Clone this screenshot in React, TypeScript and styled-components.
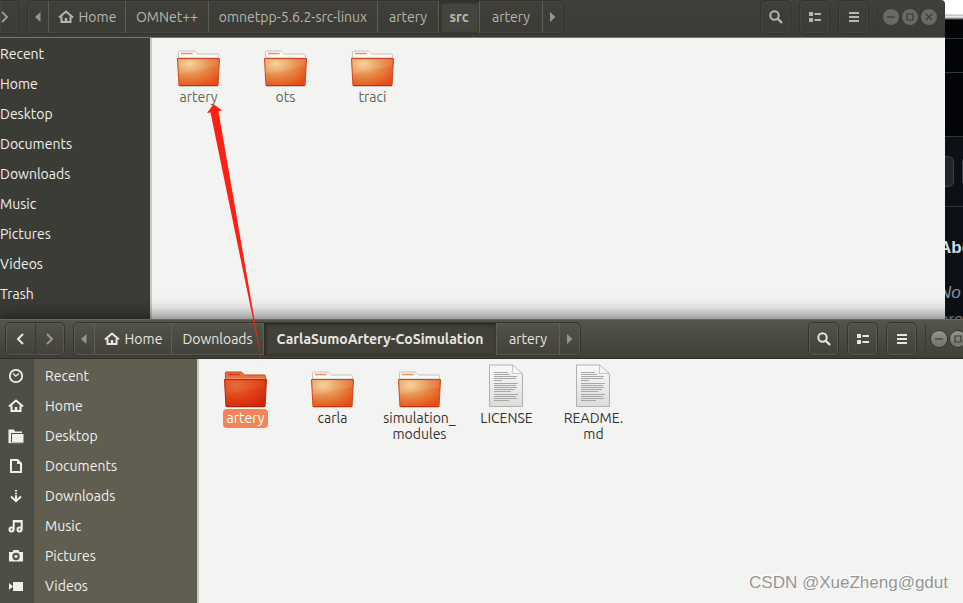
import React from "react";
import styled, { createGlobalStyle, css } from "styled-components";

const Global = createGlobalStyle`
  *, *::before, *::after { box-sizing: border-box; }
  body { margin: 0; background: #f3f3f2; font-family: Ubuntu, "Noto Sans", sans-serif; font-size: 14px; }
  button { font: inherit; color: inherit; padding: 0; margin: 0; border: 0; background: none; cursor: pointer; }
  ul { list-style: none; margin: 0; padding: 0; }
  a { color: inherit; text-decoration: none; }
  svg { display: block; flex: none; }
`;

const Desktop = styled.div`
  position: relative;
  display: flex;
  flex-direction: column;
  height: 100vh;
  overflow: hidden;
`;

const BackArea = styled.div`
  display: flex;
  flex: 0 0 319px;
  min-height: 0;
  overflow: hidden;
  background: linear-gradient(#fff 14px, #b9b9b9 15px, #f4f4f4 17px, #0b0e13 20px);
`;

const Win = styled.section<{ $front?: boolean }>`
  position: relative;
  display: flex;
  flex-direction: column;
  flex: 1;
  min-width: 0;
  min-height: 0;
  ${(p) => p.$front && css`box-shadow: 0 0 18px 2px rgba(0, 0, 0, 0.6);`}
`;

const Header = styled.header<{ $front?: boolean }>`
  display: flex;
  align-items: center;
  flex: none;
  height: ${(p) => (p.$front ? 40 : 38)}px;
  color: ${(p) => (p.$front ? "#e8e6e0" : "#b8b6ae")};
  ${(p) =>
    p.$front
      ? css`
          width: calc(100% + 26px);
          padding: 0 4px 0 5px;
          border-top: 1px solid #6a695d;
          border-bottom: 1px solid #2c2c28;
          background: linear-gradient(#56554a, #403f39);
        `
      : css`
          padding: 0 8px 3px 0;
          border-bottom: 1px solid #77766f;
          border-top-right-radius: 4px;
          background: linear-gradient(#403f3a, #3b3b36);
        `}
`;

const edge = css<{ $front?: boolean }>`
  border: 1px solid ${(p) => (p.$front ? "#35352f" : "#33332e")};
  box-shadow: inset 0 0 0 1px ${(p) => (p.$front ? "#5b5a50" : "#464640")};
  height: 34px;
`;

const NavGroup = styled.div<{ $front?: boolean }>`
  ${edge}
  display: flex;
  border-radius: 5px;
  width: ${(p) => (p.$front ? 60 : 19)}px;
  margin-right: 8px;
  ${(p) => !p.$front && css`border-left: 0; border-radius: 0 5px 5px 0;`}
`;

const NavButton = styled.button<{ $dim?: boolean; $start?: boolean }>`
  display: flex;
  flex: 1;
  align-items: center;
  justify-content: ${(p) => (p.$start ? "flex-start" : "center")};
  color: ${(p) => (p.$dim ? "#9a988f" : "inherit")};
  & + & { border-left: 1px solid #3a3a34; }
`;

const PathBar = styled.nav<{ $front?: boolean }>`
  ${edge}
  display: flex;
  overflow: hidden;
  border-radius: 5px;
`;

const Crumb = styled.button<{ $w: number; $active?: boolean; $front?: boolean }>`
  display: flex;
  align-items: center;
  justify-content: center;
  gap: 5px;
  width: ${(p) => p.$w}px;
  white-space: nowrap;
  & + & { border-left: 1px solid ${(p) => (p.$front ? "#5f5e54" : "#4f4f48")}; }
  ${(p) =>
    p.$active &&
    css`
      font-weight: 700;
      background: ${p.$front ? "#41413a" : "#45453f"};
      box-shadow: inset 1px 1px 3px 1px rgba(0, 0, 0, 0.35);
    `}
`;

const Tools = styled.div`
  display: flex;
  align-items: center;
  gap: 8px;
  margin-left: auto;
`;

const ToolButton = styled.button<{ $front?: boolean }>`
  ${edge}
  display: flex;
  align-items: center;
  justify-content: center;
  width: 31px;
  border-radius: 5px;
`;

const Controls = styled.div<{ $front?: boolean }>`
  display: flex;
  align-items: center;
  gap: 3px;
  height: 28px;
  padding-left: 5px;
  border-left: 1px solid ${(p) => (p.$front ? "#3a3933" : "#383833")};
`;

const Round = styled.button<{ $front?: boolean }>`
  display: flex;
  align-items: center;
  justify-content: center;
  width: 16px;
  height: 16px;
  border-radius: 50%;
  color: #3c3b36;
  background: ${(p) => (p.$front ? "linear-gradient(#94938c, #73726a)" : "#6a6963")};
  box-shadow: 0 0 0 1px ${(p) => (p.$front ? "#35352f" : "#3d3c37")};
`;

const Body = styled.div`
  display: flex;
  flex: 1;
  min-height: 0;
`;

const Side = styled.aside<{ $front?: boolean }>`
  flex: none;
  overflow: hidden;
  color: #f1f0ed;
  width: ${(p) => (p.$front ? 197 : 150)}px;
  background: ${(p) =>
    p.$front ? "linear-gradient(90deg, #4f4e44 32px, #47463d 33px, #605d51 34px)" : "#3c3c37"};
  padding-top: ${(p) => (p.$front ? 2 : 1)}px;
`;

const Place = styled.a`
  display: flex;
  align-items: center;
  height: 30px;
`;

const PlaceIcon = styled.span`
  display: flex;
  justify-content: center;
  width: 32px;
  margin-right: 13px;
`;

const Files = styled.main<{ $front?: boolean }>`
  display: grid;
  grid-template-columns: repeat(auto-fill, 87px);
  align-content: start;
  flex: 1;
  min-width: 0;
  padding: 5px 0 0 3px;
  border-left: 2px solid #cbc8c5;
  background: #f3f3f2;
  color: ${(p) => (p.$front ? "#33332f" : "#62625d")};
`;

const FileItem = styled.button`
  display: flex;
  flex-direction: column;
  align-items: center;
  justify-content: flex-start;
`;

const IconBox = styled.span`
  display: flex;
  align-items: flex-end;
  height: 44px;
  margin-bottom: 1px;
`;

const FileName = styled.span<{ $selected?: boolean }>`
  padding: 1px 3px 2px;
  border-radius: 4px;
  line-height: 16px;
  white-space: pre-line;
  ${(p) => p.$selected && css`background: #f0855a; color: #fff;`}
`;

const Sliver = styled.div`
  flex: 0 0 18px;
  overflow: hidden;
  margin-top: 20px;
  background: #0d1117;
  font-family: "Liberation Sans", Arial, sans-serif;
  white-space: nowrap;
`;

const DarkBand = styled.div<{ $h: number; $bg: string }>`
  height: ${(p) => p.$h}px;
  border-bottom: 1px solid #30353b;
  background: ${(p) => p.$bg};
`;

const ButtonBand = styled(DarkBand)`
  display: flex;
  align-items: center;
  gap: 8px;
`;

const Chip = styled.button<{ $end?: boolean }>`
  flex: none;
  width: 9px;
  height: 31px;
  border: 1px solid #3b4148;
  background: #21262d;
  ${(p) => (p.$end ? css`border-left: 0; border-radius: 0 6px 6px 0;` : css`border-radius: 6px 0 0 6px;`)}
`;

const About = styled.h2`
  margin: 29px 0 0 -6px;
  font-size: 17px;
  line-height: 24px;
  color: #d5dbe2;
`;

const Note = styled.p<{ $italic?: boolean }>`
  margin: ${(p) => (p.$italic ? "20px 0 0 -6px" : "1px 0 0 -6px")};
  font-size: 17px;
  line-height: 26px;
  font-style: ${(p) => (p.$italic ? "italic" : "normal")};
  color: #8b949e;
`;

const Arrow = styled.svg`
  position: absolute;
  left: 206px;
  top: 103px;
  pointer-events: none;
`;

const Watermark = styled.div`
  position: absolute;
  right: 15px;
  bottom: 8px;
  font-family: "Liberation Sans", Arial, sans-serif;
  font-size: 17px;
  line-height: 24px;
  color: #969694;
  text-shadow: -1px -1px 0 #fff;
`;

const Chevron = ({ left }: { left?: boolean }) => (
  <svg width="10" height="14" viewBox="0 0 10 14" fill="none" stroke="currentColor" strokeWidth="2">
    <path d={left ? "M8 2 3 7l5 5" : "M2 2l5 5-5 5"} />
  </svg>
);

const Triangle = ({ left }: { left?: boolean }) => (
  <svg width="6" height="10" viewBox="0 0 6 10" fill="#96958d">
    <path d={left ? "M5.500 0v10L0 5z" : "M0 0v10l5.500-5z"} />
  </svg>
);

const HomeIcon = () => (
  <svg width="16" height="14" viewBox="0 0 16 14" fill="none" stroke="currentColor" strokeWidth="2">
    <path d="M1 7.500 8 1.500l7 6" />
    <path d="M3.500 6.500V12h9V6.500" />
    <path d="M8 8v4" strokeWidth="2.400" />
  </svg>
);

const SearchIcon = () => (
  <svg width="16" height="16" viewBox="0 0 16 16" fill="none" stroke="currentColor" strokeWidth="2">
    <circle cx="6.500" cy="6.500" r="4.200" />
    <path d="m9.500 9.500 4.500 4.500" strokeWidth="2.400" />
  </svg>
);

const ListIcon = () => (
  <svg width="12" height="10" viewBox="0 0 12 10" fill="currentColor">
    <path d="M0 0h4v4H0zM0 6h4v4H0zM5.500 1h6.500v2H5.500zM5.500 7h6.500v2H5.500z" />
  </svg>
);

const MenuIcon = () => (
  <svg width="10" height="10" viewBox="0 0 10 10" fill="currentColor">
    <path d="M0 0h10v2H0zM0 4h10v2H0zM0 8h10v2H0z" />
  </svg>
);

const ControlGlyph = ({ d }: { d: string }) => (
  <svg width="16" height="16" viewBox="0 0 16 16" fill="none" stroke="currentColor" strokeWidth="1.200">
    <path d={d} />
  </svg>
);

const PlaceGlyph = ({ name }: { name: string }) => {
  if (name === "Home") return <HomeIcon />;
  return (
    <svg width="16" height="16" viewBox="0 0 16 16" fill="none" stroke="currentColor" strokeWidth="2">
      {name === "Recent" && (
        <>
          <circle cx="8" cy="8" r="6.200" strokeWidth="1.800" />
          <path d="M5 5.500 7.800 8.200 11 5.500" strokeWidth="1.300" />
        </>
      )}
      {name === "Desktop" && (
        <>
          <path d="M.5 15V1.500H6l1 2h7V5H3v9.500z" fill="currentColor" stroke="none" />
          <path d="M4 6h11.500v8H4z" fill="currentColor" stroke="none" />
          <path d="M.5 14.700h15" strokeWidth=".8" />
        </>
      )}
      {name === "Documents" && (
        <>
          <path d="M3 2h6.500L13 5.500V14H3z" />
          <path d="M9 2v4h4z" fill="currentColor" stroke="none" />
        </>
      )}
      {name === "Downloads" && (
        <>
          <path d="M8 2v1.500M8 4.700v1.500M8 7.200v6" />
          <path d="m3 8.500 5 4.700 5-4.700" />
        </>
      )}
      {name === "Music" && (
        <>
          <circle cx="3.500" cy="11.500" r="2" />
          <circle cx="11.500" cy="11.500" r="2" />
          <path d="M5.700 11.500V3h8v8.500M5.700 3.500h8" />
        </>
      )}
      {name === "Pictures" && (
        <>
          <path d="M1 4h3.500l1-2h5l1 2H15v9.500H1z" fill="currentColor" stroke="none" />
          <circle cx="8" cy="8.500" r="2.700" stroke="#4f4e44" />
        </>
      )}
      {name === "Videos" && (
        <path d="M1 5l4 3.500L1 12zM5 4h10v9H5z" fill="currentColor" stroke="none" />
      )}
    </svg>
  );
};

const FolderIcon = ({ id, red }: { id: string; red?: boolean }) => (
  <svg width="43" height="37" viewBox="0 0 44 37" preserveAspectRatio="none">
    <defs>
      <radialGradient id={id} cx="0.28" cy="0.2" r="0.9">
        <stop offset="0" stopColor={red ? "#e6622c" : "#f6cd92"} />
        <stop offset="0.5" stopColor={red ? "#df4518" : "#e68a47"} />
        <stop offset="1" stopColor={red ? "#d22508" : "#e84c17"} />
      </radialGradient>
    </defs>
    <path d="M2 35.500h40l-1 1.500H3z" fill="#000" opacity=".18" />
    <path
      d="M1.500 12V2q0-1 1-1H17q1.500 0 2.500 1.500l1.500 1.500h20q1.500 0 1.500 1.500V12z"
      fill={red ? "#ec6f3e" : "#f9f9f8"}
      stroke={red ? "#b8482a" : "#c4c3c1"}
    />
    <path d="M4 3.500h12" stroke={red ? "#d63c13" : "#ee9257"} strokeWidth="1.500" />
    <path d="M2 7.500h40" stroke={red ? "#f29567" : "#dddcd9"} />
    <path d="M.5 8.500h43L42 35.500H2z" fill={`url(#${id})`} stroke={red ? "#b72508" : "#c9481d"} />
    <path d="M1.500 9.500h41L42 16Q23 19 2 24z" fill="#fff" opacity={red ? 0.05 : 0.1} />
    <path d="M2 35.500h40" stroke={red ? "#a82207" : "#b83411"} />
  </svg>
);

const PageIcon = ({ id }: { id: string }) => (
  <svg width="36" height="44" viewBox="0 0 36 44">
    <defs>
      <linearGradient id={id} x1="0" y1="0" x2="0" y2="1">
        <stop offset="0" stopColor="#fafafa" />
        <stop offset="1" stopColor="#dcdcdc" />
      </linearGradient>
    </defs>
    <path d="M.5 1H23.500l10 9v32.500H.5z" fill={`url(#${id})`} stroke="#b0b0ae" />
    <path d="M23.500 1q.5 6-.5 8.500 6-1 10.500.5z" fill="#fff" stroke="#b5b5b3" strokeWidth=".8" />
    <g stroke="#a8a8a6" strokeWidth="1">
      <path d="M5 8.500h14M5 10.500h16M5 12.500h23M5 14.500h22M5 16.500h8" />
      <path d="M5 19.500h24M5 21.500h22M5 23.500h23M5 25.500h21M5 27.500h17" />
      <path d="M5 30.500h24M5 32.500h22M5 34.500h23M5 36.500h15" />
    </g>
  </svg>
);

type CrumbData = { text: string; w: number; home?: boolean; active?: boolean };
type FileData = { name: string; kind: "folder" | "page"; selected?: boolean };

const places = ["Recent", "Home", "Desktop", "Documents", "Downloads", "Music", "Pictures", "Videos"];

const HeaderBar = ({ front, crumbs }: { front?: boolean; crumbs: CrumbData[] }) => (
  <Header $front={front}>
    <NavGroup $front={front}>
      {front && <NavButton aria-label="Back"><Chevron left /></NavButton>}
      <NavButton aria-label="Forward" $dim $start={!front}><Chevron /></NavButton>
    </NavGroup>
    <PathBar $front={front} aria-label="Location">
      <Crumb $w={20} $front={front} aria-label="Scroll path left"><Triangle left /></Crumb>
      {crumbs.map((c, i) => (
        <Crumb key={i} $w={c.w} $active={c.active} $front={front}>
          {c.home && <HomeIcon />}
          {c.text}
        </Crumb>
      ))}
      <Crumb $w={21} $front={front} aria-label="Scroll path right"><Triangle /></Crumb>
    </PathBar>
    <Tools>
      <ToolButton $front={front} aria-label="Search"><SearchIcon /></ToolButton>
      <ToolButton $front={front} aria-label="Toggle view"><ListIcon /></ToolButton>
      <ToolButton $front={front} aria-label="Menu"><MenuIcon /></ToolButton>
      <Controls $front={front}>
        <Round $front={front} aria-label="Minimize"><ControlGlyph d="M4 8h8" /></Round>
        <Round $front={front} aria-label="Maximize"><ControlGlyph d="M5 5h6v6H5z" /></Round>
        <Round $front={front} aria-label="Close"><ControlGlyph d="m5 5 6 6m0-6-6 6" /></Round>
      </Controls>
    </Tools>
  </Header>
);

const FileGrid = ({ front, files }: { front?: boolean; files: FileData[] }) => (
  <Files as={front ? "main" : "div"} $front={front}>
    {files.map((f, i) => {
      const id = `${front ? "front" : "back"}-${i}`;
      return (
        <FileItem key={id}>
          <IconBox>{f.kind === "folder" ? <FolderIcon id={id} red={f.selected} /> : <PageIcon id={id} />}</IconBox>
          <FileName $selected={f.selected}>{f.name}</FileName>
        </FileItem>
      );
    })}
  </Files>
);

const SideBar = ({ front, items }: { front?: boolean; items: string[] }) => (
  <Side $front={front}>
    <ul>
      {items.map((p) => (
        <li key={p}>
          <Place href="#">
            {front && <PlaceIcon><PlaceGlyph name={p} /></PlaceIcon>}
            {p}
          </Place>
        </li>
      ))}
    </ul>
  </Side>
);

export default function App() {
  return (
    <>
      <Global />
      <Desktop>
        <BackArea>
          <Win>
            <HeaderBar
              crumbs={[
                { text: "Home", w: 77, home: true },
                { text: "OMNet++", w: 83 },
                { text: "omnetpp-5.6.2-src-linux", w: 169 },
                { text: "artery", w: 61 },
                { text: "src", w: 41, active: true },
                { text: "artery", w: 63 },
              ]}
            />
            <Body>
              <SideBar items={[...places, "Trash"]} />
              <FileGrid
                files={[
                  { name: "artery", kind: "folder" },
                  { name: "ots", kind: "folder" },
                  { name: "traci", kind: "folder" },
                ]}
              />
            </Body>
          </Win>
          <Sliver>
            <DarkBand $h={19} $bg="#020408" />
            <DarkBand $h={34} $bg="#020408" />
            <DarkBand $h={64} $bg="#020408" />
            <ButtonBand $h={70} $bg="#0d1117">
              <Chip $end aria-label="Previous action" />
              <Chip aria-label="Next action" />
            </ButtonBand>
            <About>About</About>
            <Note $italic>No</Note>
            <Note>provided</Note>
          </Sliver>
        </BackArea>
        <Win $front>
          <HeaderBar
            front
            crumbs={[
              { text: "Home", w: 77, home: true },
              { text: "Downloads", w: 92 },
              { text: "CarlaSumoArtery-CoSimulation", w: 233, active: true },
              { text: "artery", w: 63 },
            ]}
          />
          <Body>
            <SideBar front items={places} />
            <FileGrid
              front
              files={[
                { name: "artery", kind: "folder", selected: true },
                { name: "carla", kind: "folder" },
                { name: "simulation_\nmodules", kind: "folder" },
                { name: "LICENSE", kind: "page" },
                { name: "README.\nmd", kind: "page" },
              ]}
            />
          </Body>
        </Win>
        <Arrow width="58" height="262" viewBox="0 0 58 262" aria-hidden="true">
          <path d="M7.500 1 16 7.500l-3.500 1L56 260 4.500 9.500 1 10z" fill="#ff2014" />
        </Arrow>
        <Watermark>CSDN @XueZheng@gdut</Watermark>
      </Desktop>
    </>
  );
}
